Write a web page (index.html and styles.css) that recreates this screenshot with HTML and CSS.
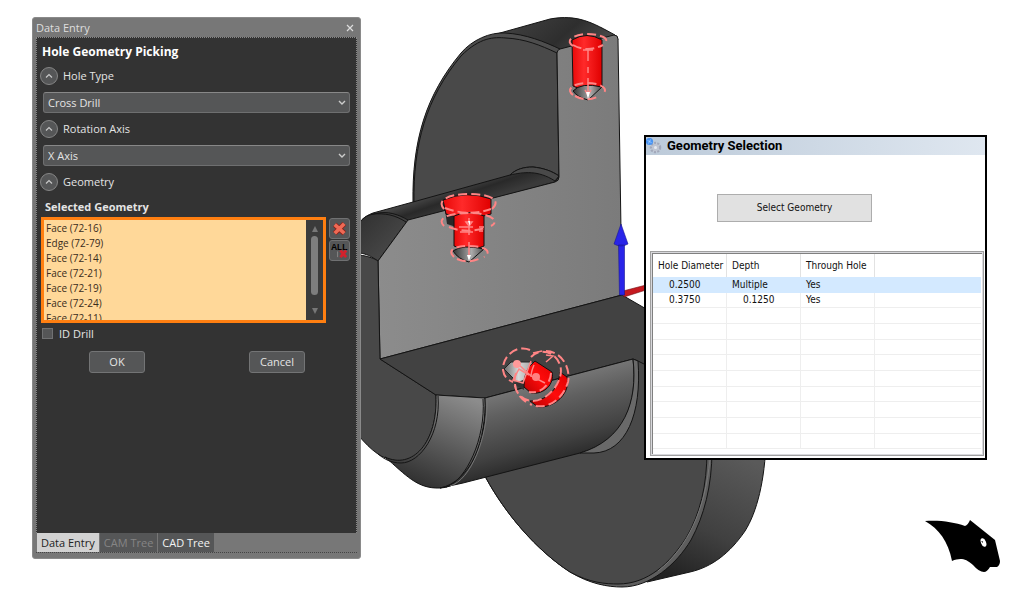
FILE: index.html
```html
<!DOCTYPE html>
<html lang="en">
<head>
<meta charset="utf-8">
<title>Hole Geometry Picking</title>
<link rel="stylesheet" href="styles.css">
</head>
<body>
<main class="workspace">
<svg class="viewport" viewBox="0 0 1024 607" preserveAspectRatio="xMinYMin meet" role="img" aria-label="Sectioned part with cross-drilled holes">
  <defs>
    <linearGradient id="rim" x1="0" y1="0" x2="1" y2="0.3"><stop offset="0" stop-color="#555"/><stop offset=".4" stop-color="#3a3a3a"/><stop offset=".7" stop-color="#2e2e2e"/><stop offset="1" stop-color="#484848"/></linearGradient>
    <linearGradient id="cut" x1="0" y1="0" x2="1" y2="0"><stop offset="0" stop-color="#8c8c8c"/><stop offset="1" stop-color="#7b7b7b"/></linearGradient>
    <linearGradient id="bossTop" gradientUnits="userSpaceOnUse" x1="455" y1="185" x2="463" y2="208"><stop offset="0" stop-color="#4a4a4a"/><stop offset=".5" stop-color="#292929"/><stop offset="1" stop-color="#3a3a3a"/></linearGradient>
    <linearGradient id="chamTop" x1="0" y1="0" x2="1" y2="1"><stop offset="0" stop-color="#303030"/><stop offset="1" stop-color="#505050"/></linearGradient>
    <linearGradient id="boss" gradientUnits="userSpaceOnUse" x1="540" y1="370" x2="564" y2="462"><stop offset="0" stop-color="#828282"/><stop offset=".35" stop-color="#606060"/><stop offset=".75" stop-color="#424242"/><stop offset="1" stop-color="#282828"/></linearGradient>
    <linearGradient id="cham" gradientUnits="userSpaceOnUse" x1="465" y1="396" x2="425" y2="488"><stop offset="0" stop-color="#8c8c8c"/><stop offset=".45" stop-color="#626262"/><stop offset="1" stop-color="#303030"/></linearGradient>
    <linearGradient id="disc" gradientUnits="userSpaceOnUse" x1="740" y1="455" x2="680" y2="580"><stop offset="0" stop-color="#5a5a5a"/><stop offset=".6" stop-color="#404040"/><stop offset="1" stop-color="#222"/></linearGradient>
    <linearGradient id="red" x1="0" y1="0" x2="1" y2="0"><stop offset="0" stop-color="#e80808"/><stop offset=".4" stop-color="#ff2a2a"/><stop offset="1" stop-color="#e00000"/></linearGradient>
    <linearGradient id="cone" x1="0" y1="0" x2="1" y2="0"><stop offset="0" stop-color="#343434"/><stop offset=".6" stop-color="#aaa"/><stop offset="1" stop-color="#4c4c4c"/></linearGradient>
    <linearGradient id="tip" x1="0" y1="0" x2="1" y2="0"><stop offset="0" stop-color="#6a6a6a"/><stop offset=".5" stop-color="#d8d8d8"/><stop offset="1" stop-color="#a0a0a0"/></linearGradient>
    <linearGradient id="redTilt" x1="0" y1="1" x2="1" y2="0"><stop offset="0" stop-color="#b80000"/><stop offset=".5" stop-color="#ff0c0c"/><stop offset="1" stop-color="#e00000"/></linearGradient>
  </defs>
  <g class="edges">
    <!-- lower flange -->
    <path fill="url(#disc)" d="M700 440H766C765 480 757 512 745 531C730 553 712 567 690 572L647 582L620 560Z"/>
    <path fill="#5e5e5e" d="M486 478C505 513 536 550 570 572C590 584 608 587 622 587C650 587 676 565 691 540C704 516 712 486 712 450H648V340H600L486 380Z"/>
    <path fill="#494949" d="M486 478C505 513 536 550 570 572C590 583 606 584 618 584C648 584 670 563 686 538C700 514 707 486 707 450H650V340H600L480 400Z"/>
    <!-- upper flange -->
    <path fill="url(#rim)" d="M473 43L500 33L550 19C578 14 593 23 615 35L618 40L560 56Z"/>
    <path fill="#4d4d4d" d="M413 203C412 140 426 95 461 53C472 40 490 32 505 33C526 34 545 42 560 49L560 180Z"/>
    <path fill="#494949" d="M414 203C413 145 426 98 461 56C480 37 494 37 506 38C525 39 540 45 557 53L559 180L500 205Z"/>
    <!-- boss, upper half -->
    <path fill="url(#bossTop)" d="M360 222C364 217 368 215 373 213L413 202L510 175C516 169 524 167 533 167C543 168 552 171 559 176L555 182L408 222L378 235Z"/>
    <path fill="#494949" d="M510 175C516 169 524 167 533 167C543 168 552 171 559 176L555 181C538 170 524 172 510 175Z"/>
    <path fill="url(#chamTop)" d="M360 222C364 217 368 215 374 214C388 210 399 215 408 220L378 261C371 256 366 254 360 253Z"/>
    <path fill="none" d="M371 214C386 213 395 215 406 222M360 256C369 257 374 259 379 263"/>
    <!-- section plane -->
    <path fill="url(#cut)" d="M557 53Q557 50 560 49L614 35Q618 35 618 39L622 295L380 359L378 261L408 220L555 182Q559 181 559 177Z"/>
    <path fill="#484848" d="M359 255C368 256 373 258 378 261L380 359L436 395C438 432 421 461 399 461C382 460 371 450 359 436Z"/>
    <path fill="#424242" d="M380 359L622 295L648 310V366L638 361L633 359L485 398L436 395Z"/>
    <!-- boss, lower half -->
    <path fill="url(#cham)" d="M436 395L485 398C487 436 470 488 440 488C417 489 406 475 385 457C412 470 438 443 436 395Z"/>
    <path fill="url(#boss)" d="M485 398L633 359C638 402 625 440 580 453L463 483L440 488C470 482 488 440 485 398Z"/>
    <path fill="#696969" d="M633 359L638 361C642 414 626 452 594 453L580 453C624 440 638 402 633 359Z"/>
    <path fill="none" d="M438 396C441 434 420 463 401 463C391 463 384 459 378 454M483 399C486 438 466 481 446 487"/>
  </g>
  <path class="ridge" d="M487 400C488 437 471 480 450 486M710 459C705 510 688 547 658 571"/>
  <!-- cross hole in the flange -->
  <g>
    <path fill="url(#red)" stroke="#111" d="M572 40Q587 31 602 40V86Q587 94 573 86Z"/>
    <path fill="url(#cone)" stroke="#111" d="M573 91Q581 82 602 87L588 100Q577 97 573 91Z"/>
    <path class="pick" d="M573 46C565 41 572 35 586 34C600 34 610 38 605 43M573 45Q587 53 603 45M573 95C565 89 574 83 587 83C601 83 610 89 602 95M575 96Q587 102 597 97"/>
    <path class="pick solid" d="M588 50V61M588 67V73M588 78V92M583 50H593M585 90L588 95L591 90"/>
    <path fill="#fff" d="M586 92H590L588 99Z"/>
  </g>
  <!-- counterbored hole in the boss -->
  <g>
    <path fill="#282828" d="M445 210H456V227L447 224Z"/>
    <path fill="url(#red)" stroke="#111" d="M443 200Q467 190 491 199V214Q467 222 446 214Z"/>
    <path fill="url(#red)" stroke="#111" d="M454 216Q470 209 484 216V246Q470 253 454 246Z"/>
    <path fill="url(#cone)" stroke="#111" d="M453 251Q462 244 484 249L469 262Q458 259 453 251Z"/>
    <path class="pick" d="M444 209C436 200 449 194 469 194C490 194 502 200 492 209M445 208Q468 217 491 209M444 226C436 218 449 213 469 213C490 213 501 221 491 226M449 227Q466 234 485 228M454 257C446 249 457 246 469 246C484 246 493 251 484 257M457 259Q469 264 481 258"/>
    <path class="pick solid" d="M459 227H473M479 227H484M460 232H473M479 231H483M469 218V235M469 242V256M466 222L469 226L472 222Z"/>
    <path fill="#fff" d="M467 255H471L469 261ZM468 221H470V226Z"/>
  </g>
  <!-- angled hole -->
  <g>
    <path fill="url(#tip)" stroke="#222" d="M504 369L511 362L533 362L532 376L521 386Z"/>
    <path fill="#333" d="M513 384L523 380L524 390Z"/>
    <path fill="url(#redTilt)" stroke="#111" d="M535 361L552 372C555 384 544 395 531 393L524 387Q523 370 535 361Z"/>
    <path fill="url(#redTilt)" stroke="#111" d="M560 372L567 377C571 392 556 408 538 407L530 401C547 401 558 390 560 372Z"/>
    <path class="pick" d="M530 350C517 344 502 356 503 370C504 377 508 380 513 382M531 357C540 347 556 352 560 365C565 379 549 402 531 401C519 399 511 388 516 373M546 351C560 351 571 366 568 382C562 402 544 411 530 404M551 373C550 386 540 394 529 392M515 384C516 392 519 397 526 402"/>
    <path class="pick solid" d="M517 363L531 376L545 383M531 361L523 383L513 380L519 369L529 375M546 355L553 356L546 362M533 353L542 351M534 365Q531 372 531 377"/>
    <circle cx="517" cy="364" r="4" fill="#ff9a9a"/><circle cx="536" cy="377" r="4" fill="#ff8080"/>
  </g>
  <!-- axis triad -->
  <path fill="#c51a20" stroke="#701014" stroke-width=".6" d="M623 291L646 285V290L624 297Z"/>
  <path fill="#2924e8" stroke="#1a1690" stroke-width=".6" d="M618.500 245H624.500V295H619.500ZM621 224L628 244Q621 248 614 244Z"/>
  <!-- panther mark -->
  <path d="M925 521C940 520 954 522 965 526Q968 525 970 520L995 540L1000 561Q1000 565 997 567L990 567Q987 572 984 572Q979 572 973 565C965 558 960 558 952 561C948 541 939 529 925 521Z"/>
  <ellipse cx="983.500" cy="542.500" rx="2.500" ry="4.500" transform="rotate(-22 983.500 542.500)" fill="#fff"/>
  <path d="M981 541L983 541.500L983 543Z"/>
</svg>

<section class="panel" aria-label="Data Entry">
  <header class="panel-bar"><span>Data Entry</span>
    <button class="close" type="button" aria-label="Close"><svg viewBox="0 0 8 8"><path d="M1 1L7 7M7 1L1 7"/></svg></button>
  </header>
  <form class="panel-body">
    <h1>Hole Geometry Picking</h1>
    <div class="group">
      <button class="fold" type="button" aria-label="Collapse Hole Type"><svg viewBox="0 0 16 16"><path d="M5 9.500L8 6.500L11 9.500"/></svg></button>
      <label for="hole-type">Hole Type</label>
    </div>
    <div class="combo"><select id="hole-type"><option>Cross Drill</option></select><svg viewBox="0 0 8 6"><path d="M1 1L4 4L7 1"/></svg></div>
    <div class="group">
      <button class="fold" type="button" aria-label="Collapse Rotation Axis"><svg viewBox="0 0 16 16"><path d="M5 9.500L8 6.500L11 9.500"/></svg></button>
      <label for="axis">Rotation Axis</label>
    </div>
    <div class="combo"><select id="axis"><option>X Axis</option></select><svg viewBox="0 0 8 6"><path d="M1 1L4 4L7 1"/></svg></div>
    <div class="group">
      <button class="fold" type="button" aria-label="Collapse Geometry"><svg viewBox="0 0 16 16"><path d="M5 9.500L8 6.500L11 9.500"/></svg></button>
      <span>Geometry</span>
    </div>
    <h2 id="picked">Selected Geometry</h2>
    <div class="picker">
      <div class="listbox">
        <ul role="listbox" aria-labelledby="picked">
          <li role="option">Face (72-16)</li><li role="option">Edge (72-79)</li><li role="option">Face (72-14)</li><li role="option">Face (72-21)</li><li role="option">Face (72-19)</li><li role="option">Face (72-24)</li><li role="option">Face (72-11)</li>
        </ul>
        <div class="scroll"><i class="up"></i><i class="thumb"></i><i class="down"></i></div>
      </div>
      <div class="tools">
        <button type="button" aria-label="Remove"><svg viewBox="0 0 20 20"><path d="M5 6L15 15M15 5L5 15" fill="none" stroke="#8d2018" stroke-width="5.500"/><path d="M5 6L15 15M15 5L5 15" fill="none" stroke="#ee6a55" stroke-width="3.800"/></svg></button>
        <button type="button" aria-label="Remove all"><svg viewBox="0 0 20 20"><text x="1" y="9">ALL</text><path d="M11 10L17 17M17 10L11 17" fill="none" stroke="#d3212c" stroke-width="3"/><path d="M8 11V17" stroke="#888"/></svg></button>
      </div>
    </div>
    <label class="check"><input type="checkbox"><span>ID Drill</span></label>
    <div class="actions"><button type="button">OK</button><button type="button">Cancel</button></div>
  </form>
  <nav class="tabs"><button class="active" type="button">Data Entry</button><button type="button" disabled>CAM Tree</button><button type="button">CAD Tree</button></nav>
</section>

<section class="dialog" aria-label="Geometry Selection">
  <header class="dialog-bar">
    <svg viewBox="0 0 16 16"><circle cx="9.500" cy="9.500" r="4.500" fill="#c5cad6" stroke="#a2a8ba" stroke-width="2.500" stroke-dasharray="2 1.200"/><circle cx="9.500" cy="9.500" r="3.500" fill="#bfc5d2"/><circle cx="9.500" cy="9.500" r="1.500" fill="#e8ebf1"/><circle cx="3.500" cy="3.500" r="3.600" fill="#4a94f2"/><path d="M1.500 2.500L5.500 4.500M4.500 1.500L2.500 5.500" stroke="#a8d0ff" stroke-width=".8"/></svg>
    <h2>Geometry Selection</h2>
  </header>
  <button class="pick-button" type="button">Select Geometry</button>
  <div class="frame">
    <table>
      <thead><tr><th>Hole Diameter</th><th>Depth</th><th>Through Hole</th><th></th></tr></thead>
      <tbody>
        <tr class="current"><td class="num">0.2500</td><td>Multiple</td><td>Yes</td><td></td></tr>
        <tr><td class="num">0.3750</td><td class="num">0.1250</td><td>Yes</td><td></td></tr>
        <tr><td></td><td></td><td></td><td></td></tr>
        <tr><td></td><td></td><td></td><td></td></tr>
        <tr><td></td><td></td><td></td><td></td></tr>
        <tr><td></td><td></td><td></td><td></td></tr>
        <tr><td></td><td></td><td></td><td></td></tr>
        <tr><td></td><td></td><td></td><td></td></tr>
        <tr><td></td><td></td><td></td><td></td></tr>
        <tr><td></td><td></td><td></td><td></td></tr>
        <tr><td></td><td></td><td></td><td></td></tr>
      </tbody>
    </table>
  </div>
</section>
</main>
</body>
</html>
```

FILE: styles.css
```css
* { box-sizing: border-box; }
body { margin: 0; background: #fff; }
button, select, input { font: inherit; color: inherit; margin: 0; }
h1, h2, ul { margin: 0; padding: 0; }

.workspace { position: relative; min-height: 100vh; overflow: hidden; }
.viewport { display: block; width: 100%; }
.edges path { stroke: #141414; stroke-width: 1; stroke-linejoin: round; }
.ridge { fill: none; stroke: #777; stroke-width: 1; }
.pick { fill: none; stroke: #ff8585; stroke-width: 2; stroke-dasharray: 9 4; }
.pick.solid { stroke-width: 1.5; stroke-dasharray: none; }

/* Data entry panel */
.panel {
  position: absolute; left: 32px; top: 17px; width: 329px;
  padding: 1px 3px 5px; border: 1px solid #8a8a8a; border-radius: 3px;
  background: #777; color: #e4e4e4;
  font: 11px/16px "Open Sans", "Noto Sans", sans-serif;
}
.panel-bar { display: flex; justify-content: space-between; align-items: center; height: 18px; padding: 0 3px 0 0; color: #dedede; }
.close { display: flex; padding: 0; border: 0; background: none; }
.close svg { width: 8px; height: 8px; fill: none; stroke: #ddd; stroke-width: 1.2; }
.panel-body {
  display: flex; flex-direction: column; min-height: 496px; padding: 0 6px 0 5px;
  background: #333; border: 1px dotted #888; border-bottom: 0;
}
.panel h1 { font-size: 12px; line-height: 27px; color: #fff; }
.group { display: flex; align-items: center; gap: 5px; height: 22px; margin-left: -2px; }
.fold { display: flex; width: 18px; height: 18px; padding: 0; border: 1px solid #858585; border-radius: 50%; background: #555657; }
.fold svg { width: 16px; height: 16px; fill: none; stroke: #c8c8c8; stroke-width: 1.2; }
.combo { position: relative; margin: 5px 0 5px 1px; }
.combo select { display: block; appearance: none; width: 100%; height: 21px; padding: 0 4px; border: 1px solid #6e6f70; border-top-color: #888; border-radius: 3px; background: #555657; }
.combo svg { position: absolute; right: 4px; top: 8px; width: 8px; height: 6px; fill: none; stroke: #ccc; stroke-width: 1.4; pointer-events: none; }
.panel h2 { margin: 6px 0 2px 3px; font-size: 11px; line-height: 16px; }
.picker { display: flex; gap: 3px; margin-left: -1px; }
.listbox { display: flex; flex: 1; height: 106px; border: 3px solid #ff7f11; background: #ffd899; color: #3a2c1c; }
.listbox ul { flex: 1; overflow: hidden; padding: 1px 2px; list-style: none; font-size: 10px; line-height: 15px; }
.scroll { display: flex; flex-direction: column; align-items: center; width: 17px; padding: 6px 0; background: #3b3b3b; }
.up, .down { border: 3px solid transparent; }
.up { border-top: 0; border-bottom: 6px solid #777; }
.down { border-bottom: 0; border-top: 6px solid #777; margin-top: auto; }
.thumb { width: 7px; height: 59px; margin-top: 4px; border-radius: 4px; background: #7e7e7e; }
.tools { display: flex; flex-direction: column; gap: 1px; padding-top: 1px; }
.tools button { display: flex; width: 21px; height: 21px; padding: 0; border: 1px solid #707172; border-radius: 3px; background: #555657; }
.tools svg { width: 19px; height: 19px; }
.tools text { font: bold 9px "Liberation Sans", sans-serif; fill: #000; }
.check { display: flex; align-items: center; gap: 6px; height: 21px; }
.check input { appearance: none; width: 11px; height: 11px; border: 1px solid #707172; background: #555657; }
.actions { display: flex; justify-content: space-between; padding: 7px 45px 0 47px; }
.actions button { width: 56px; height: 22px; padding: 0; border: 1px solid #737475; border-radius: 3px; background: #555657; }
.tabs { display: flex; gap: 1px; height: 20px; padding-left: 1px; border-bottom: 1px dotted #444; }
.tabs button { padding: 0 4px; border: 0; background: #555657; color: #f2f2f2; }
.tabs button:disabled { color: #858585; }
.tabs .active { background: #d2d2d2; color: #222; }

/* Geometry selection dialog */
.dialog {
  position: absolute; left: 644px; top: 135px; width: 343px;
  display: flex; flex-direction: column; padding-bottom: 2px; border: 2px solid #000; background: #fff;
  color: #111; font: 10px/14px "DejaVu Sans Condensed", "DejaVu Sans", sans-serif;
}
.dialog-bar { display: flex; align-items: center; gap: 5px; height: 18px; background: linear-gradient(90deg, #bccad9, #dfe7f0); }
.dialog-bar svg { width: 16px; height: 16px; }
.dialog-bar h2 { font: bold 13px/18px Roboto, "Liberation Sans", sans-serif; color: #000; }
.pick-button { align-self: flex-start; width: 155px; height: 28px; margin: 39px 0 29px 71px; padding: 0; border: 1px solid #adadad; background: #e1e1e1; }
.frame { margin: 0 1px 0 4px; padding: 2px 2px 6px; border: 1px solid #a0a0a0; box-shadow: inset 1px 1px #d8d8dc, inset -1px -1px #d8d8dc, inset 2px 2px #808080; }
table { width: 100%; border-collapse: separate; border-spacing: 0; table-layout: fixed; }
th, td { padding: 0 0 0 5px; border-right: 1px solid #eee; text-align: left; font-weight: normal; white-space: nowrap; }
th { width: 74px; height: 23px; border-color: #e2e2e2; }
th:last-child { width: auto; }
th:last-child, td:last-child { border-right: 0; }
td { height: 16px; border-bottom: 1px solid #eee; line-height: 14px; }
tbody tr:nth-child(3n+2) td { height: 15px; }
td.num { padding-left: 16px; }
.current td { background: #d3e9ff; border-color: #d3e9ff; }
```
